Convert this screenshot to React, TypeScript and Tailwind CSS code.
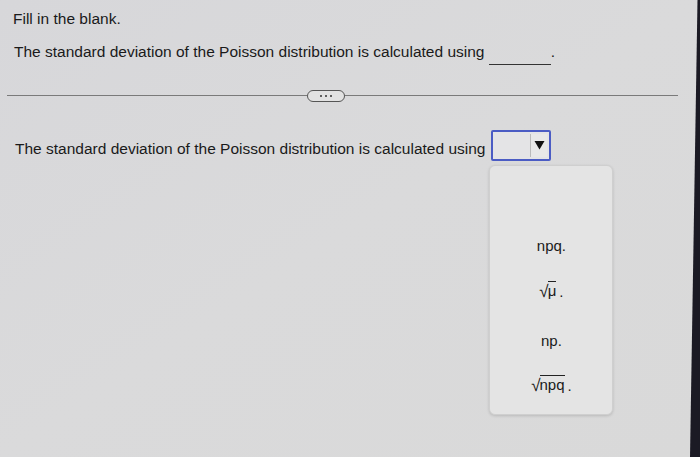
import { useState } from "react";

const options = ["npq", "mu", "np", "sqrtnpq"] as const;

function Radical({ children }: { children: React.ReactNode }) {
  return (
    <span className="inline-flex items-end">
      <span className="mr-[-1px] text-[17px] leading-none">√</span>
      <span className="border-t border-[#222] leading-[1.1] pt-[1px]">{children}</span>
    </span>
  );
}

function OptionLabel({ value }: { value: (typeof options)[number] }) {
  if (value === "npq") return <span>npq.</span>;
  if (value === "np") return <span>np.</span>;
  return (
    <span className="inline-flex items-baseline gap-[3px]">
      <Radical>{value === "mu" ? "μ" : "npq"}</Radical>
      <span>.</span>
    </span>
  );
}

export default function App() {
  const [open] = useState(true);

  return (
    <div className="flex h-[457px] w-[700px] overflow-hidden bg-gradient-to-br from-[#d7d7da] via-[#dadadb] to-[#d9d9d9] font-['Liberation_Sans',Arial,sans-serif] text-[15.5px] text-[#1a1a1a]">
      <div className="flex flex-1 flex-col">
        <p className="pl-[13px] pt-[7px]">Fill in the blank.</p>
        <p className="pl-[14px] pt-[10px]">
          The standard deviation of the Poisson distribution is calculated using{" "}
          <span className="inline-block w-[62px] border-b border-[#333] align-baseline">&nbsp;</span>.
        </p>

        {/* divider with the collapse pill */}
        <div className="mt-[25px] flex items-center pl-[7px] pr-[12px]">
          <div className="h-px flex-[303] bg-[#7a7a7a]" />
          <button className="flex h-[12px] w-[38px] items-center justify-center gap-[3px] rounded-full border border-[#555] bg-[#e2e2e2]">
            <span className="h-[2px] w-[2px] rounded-full bg-[#333]" />
            <span className="h-[2px] w-[2px] rounded-full bg-[#333]" />
            <span className="h-[2px] w-[2px] rounded-full bg-[#333]" />
          </button>
          <div className="h-px flex-[337] bg-[#7a7a7a]" />
        </div>

        <div className="mt-[28px] flex items-start pl-[15px]">
          <span className="pt-[7px]">
            The standard deviation of the Poisson distribution is calculated using
          </span>
          <div className="ml-[6px] flex flex-col">
            <div className="flex h-[31px] w-[60px] items-center justify-end rounded-[2px] border-2 border-[#4b5cc4] bg-[#e4e4e6] pr-[2px]">
              <div className="flex h-[23px] w-[17px] items-center justify-center border-l border-[#bbb] bg-[#e8e8e8]">
                <svg width="11" height="10" viewBox="0 0 11 10">
                  <path d="M0.5 1 L10.5 1 L5.5 9.5 Z" fill="#111" />
                </svg>
              </div>
            </div>
            {open && (
              <ul className="ml-[-2px] mt-[4px] flex h-[250px] w-[124px] flex-col items-center rounded-[6px] border border-[#cfcfcf] bg-[#e4e4e4] pt-[69px] text-[15px] shadow-[0_1px_3px_rgba(0,0,0,0.15)]">
                {options.map((o, i) => (
                  <li
                    key={o}
                    className={
                      i === 0 ? "h-[18px]" : i === 1 ? "mt-[28px] h-[22px]" : i === 2 ? "mt-[27px] h-[18px]" : "mt-[27px] h-[22px]"
                    }
                  >
                    <OptionLabel value={o} />
                  </li>
                ))}
              </ul>
            )}
          </div>
        </div>
      </div>

      {/* monitor bezel along the right edge */}
      <div className="w-[10px] bg-[#1b1a24] [clip-path:polygon(75%_0,100%_0,100%_100%,0_100%)]" />
    </div>
  );
}
